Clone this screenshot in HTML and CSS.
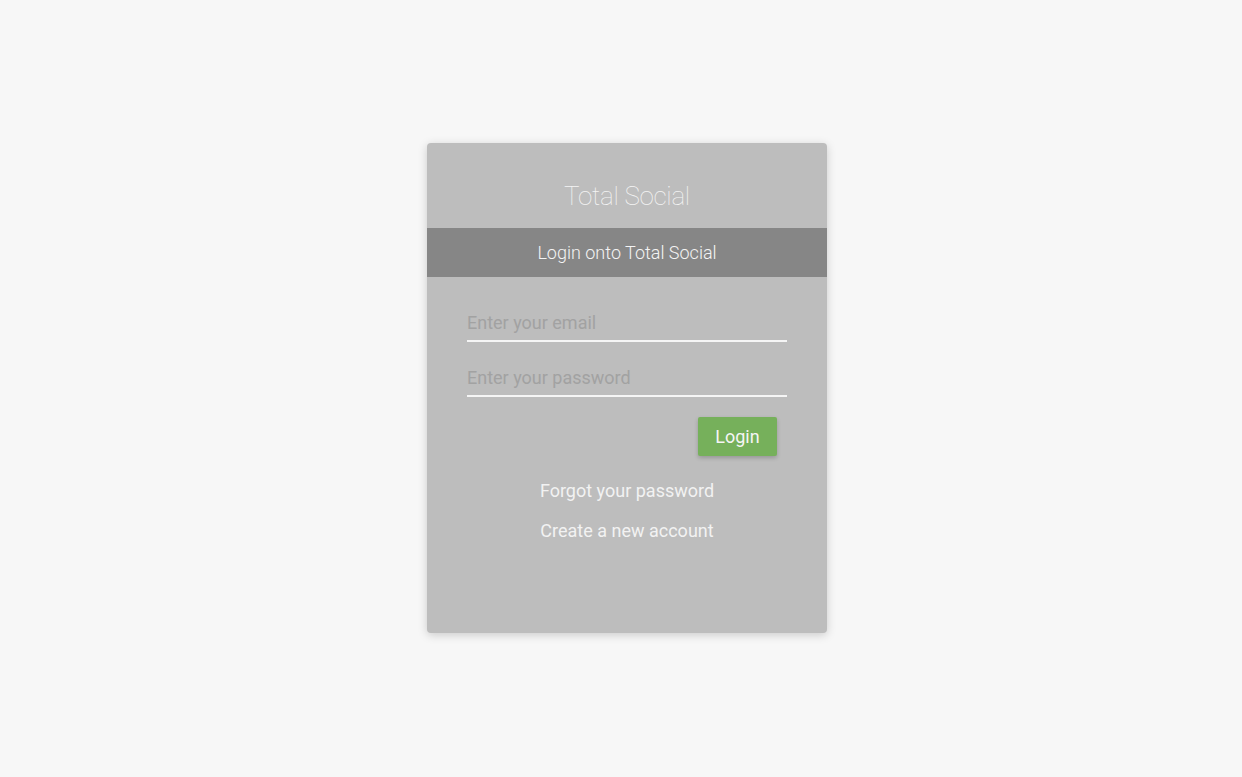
FILE: index.html
```html
<!DOCTYPE html>
<html>
<head>
<meta charset="utf-8">
<link rel="stylesheet" href="styles.css">
</head>
<body>
<div class="page">
  <div class="card">
    <div class="brand">Total Social</div>
    <div class="bar">Login onto Total Social</div>
    <form class="form">
      <input class="field" type="email" placeholder="Enter your email">
      <input class="field" type="password" placeholder="Enter your password">
      <div class="actions"><button class="btn" type="button">Login</button></div>
      <a class="link" href="#">Forgot your password</a>
      <a class="link" href="#">Create a new account</a>
    </form>
  </div>
</div>
</body>
</html>
```
FILE: styles.css
```css
html, body {
  margin: 0;
  padding: 0;
  background: #f7f7f7;
  font-family: Roboto, "Liberation Sans", sans-serif;
}
.page {
  height: 777px;
  box-sizing: border-box;
  padding: 143px 0 0 12px;
  display: flex;
  justify-content: center;
  align-items: flex-start;
}
.card {
  width: 400px;
  height: 490px;
  background: #bdbdbd;
  border-radius: 4px;
  box-shadow: 0 2px 10px rgba(0,0,0,0.18);
  overflow: hidden;
}
.brand {
  height: 85px;
  box-sizing: border-box;
  padding-top: 38px;
  text-align: center;
  color: #f4f4f4;
  font-family: Roboto, "Liberation Sans", Arial, sans-serif;
  font-weight: 100;
  font-size: 26px;
  letter-spacing: -0.3px;
  line-height: 30px;
}
.bar {
  height: 49px;
  background: #868686;
  color: #f4f4f4;
  font-size: 18px;
  font-weight: 300;
  line-height: 49px;
  text-align: center;
}
.form {
  padding: 28px 40px 0;
  display: flex;
  flex-direction: column;
}
.field {
  display: block;
  width: 320px;
  height: 37px;
  box-sizing: border-box;
  margin: 0 0 18px;
  padding: 0;
  border: 0;
  border-bottom: 2px solid #f5f5f5;
  background: transparent;
  font-family: Roboto, "Liberation Sans", sans-serif;
  font-size: 18px;
  color: #555;
  outline: none;
}
.field::placeholder {
  color: #a2a2a2;
}
.actions {
  display: flex;
  justify-content: flex-end;
  padding-right: 10px;
  margin-top: 2px;
}
.btn {
  width: 79px;
  height: 39px;
  border: 0;
  border-radius: 2px;
  background: #76b05b;
  color: #f5f5f5;
  font-family: Roboto, "Liberation Sans", sans-serif;
  font-size: 18px;
  box-shadow: 0 2px 4px rgba(0,0,0,0.2);
  cursor: pointer;
}
.link {
  display: block;
  text-align: center;
  color: #f2f2f2;
  text-decoration: none;
  font-size: 18px;
  line-height: 22px;
}
.link:first-of-type {
  margin-top: 24px;
}
.link + .link {
  margin-top: 18px;
}
```
